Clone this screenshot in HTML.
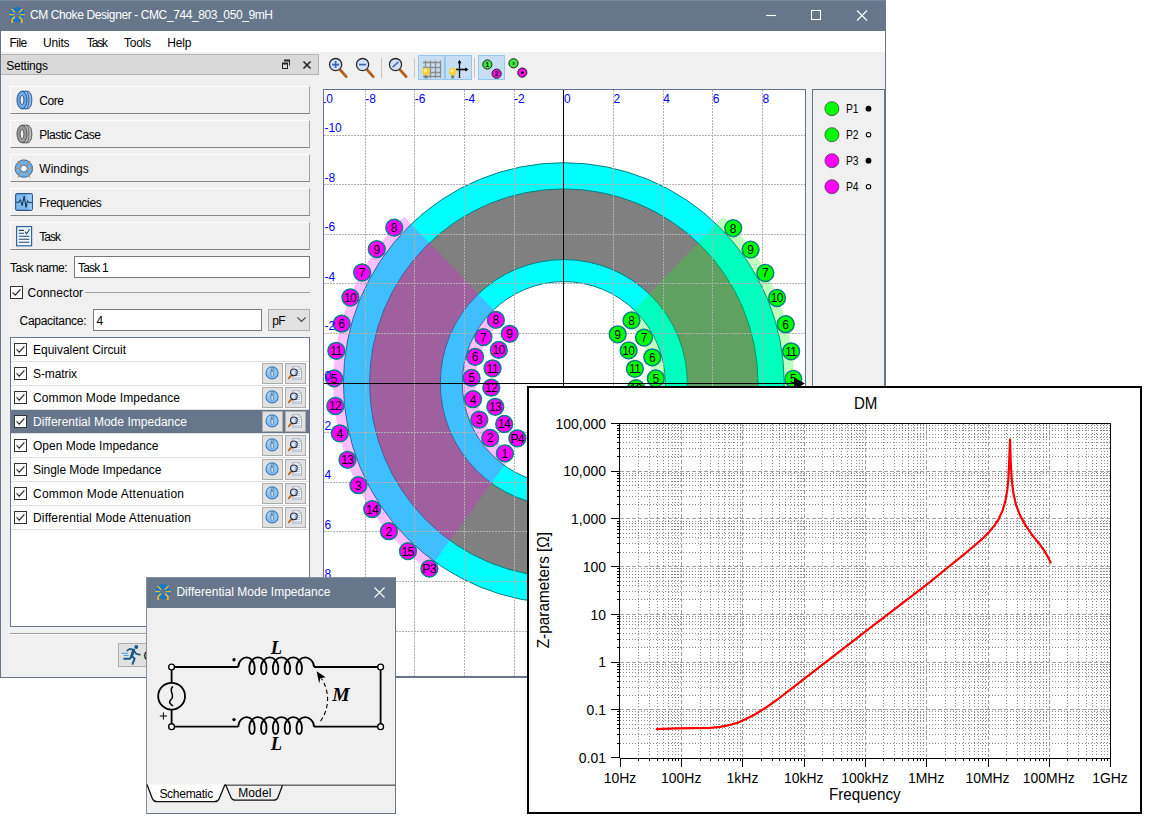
<!DOCTYPE html>
<html><head><meta charset="utf-8"><title>CM Choke Designer</title>
<style>
html,body{margin:0;padding:0;background:#fff;}
body{width:1152px;height:824px;position:relative;overflow:hidden;font-family:"Liberation Sans",sans-serif;font-size:12px;}
.t{position:absolute;white-space:nowrap;line-height:1;}
svg{position:absolute;overflow:visible;}
svg text{font-family:"Liberation Sans",sans-serif;}
</style></head><body>
<div style="position:absolute;left:0px;top:0px;width:886px;height:678px;background:#68768b;"></div>
<div style="position:absolute;left:0px;top:0px;width:886px;height:1px;background:#7b8799;"></div>
<div style="position:absolute;left:1px;top:31px;width:884px;height:646px;background:#f0f0f0;"></div>
<div style="position:absolute;left:1px;top:31px;width:884px;height:21px;background:#fff;"></div>
<svg style="left:8px;top:6px" width="18" height="18" viewBox="0 0 18 18"><circle cx="9" cy="8.6" r="5" fill="none" stroke="#1a78c8" stroke-width="5"/><g stroke="#fbb81c" stroke-width="1.4" stroke-linecap="butt" fill="none"><path d="M1.2 8.6H6.2M11.8 8.6H16.8M3.5 3L7 6.5M14.5 3L11 6.5"/><path d="M7 10.7L4.2 13.3V17M11 10.7L13.8 13.3V17" stroke-width="1.7"/></g></svg>
<span class="t" style="left:30.00px;top:9.34px;font-size:12px;color:#fff;letter-spacing:-0.398px;">CM Choke Designer - CMC_744_803_050_9mH</span>
<svg style="left:760px;top:0" width="126" height="31"><g stroke="#fff" stroke-width="1.1" fill="none"><path d="M6 15.5H16"/><rect x="51.5" y="10.5" width="9" height="9"/><path d="M97 10.5L107 20.5M107 10.5L97 20.5"/></g></svg>
<span class="t" style="left:9.50px;top:36.54px;font-size:12px;color:#000;letter-spacing:-0.545px;">File</span>
<span class="t" style="left:43.00px;top:36.54px;font-size:12px;color:#000;letter-spacing:-0.185px;">Units</span>
<span class="t" style="left:86.80px;top:36.54px;font-size:12px;color:#000;letter-spacing:-1.158px;">Task</span>
<span class="t" style="left:124.00px;top:36.54px;font-size:12px;color:#000;letter-spacing:-0.253px;">Tools</span>
<span class="t" style="left:167.30px;top:36.54px;font-size:12px;color:#000;letter-spacing:-0.193px;">Help</span>
<div style="position:absolute;left:1px;top:54px;width:318px;height:21px;background:#d9d9d9;border:1px solid #b4b4b4;box-sizing:border-box;border-left:none"></div>
<span class="t" style="left:6.30px;top:60.04px;font-size:12px;color:#000;letter-spacing:-0.251px;">Settings</span>
<svg style="left:280px;top:56px" width="36" height="16"><g stroke="#222" fill="none"><path d="M4.5 4.5H9.5V9.5" stroke-width="1"/><path d="M4 4.5H10" stroke-width="2"/><rect x="2.5" y="7.5" width="5" height="5" fill="#d9d9d9"/><path d="M2 7.5H8" stroke-width="2"/><path d="M23.5 5.5L30.5 12.5M30.5 5.5L23.5 12.5" stroke-width="1.6"/></g></svg>
<div style="position:absolute;left:10px;top:86px;width:300px;height:28px;background:#f0f0f0;box-sizing:border-box;border-top:1px solid #fff;border-left:1px solid #fff;border-bottom:1px solid #868686;border-right:1px solid #a0a0a0;"><svg style="left:5px;top:3px" width="18" height="20" viewBox="0 0 18 20"><path d="M6 1.2H11C14.3 1.2 15.8 5 15.8 10S14.3 18.8 11 18.8H6Z" fill="#8cc0f0" stroke="#28558c" stroke-width="1"/><ellipse cx="6" cy="10" rx="5" ry="8.8" fill="#6aaae8" stroke="#28558c"/><ellipse cx="6" cy="10" rx="2" ry="4.6" fill="#f0f0f0" stroke="#28558c"/><path d="M11 1.5C13.5 4 13.5 16 11 18.5" fill="none" stroke="#28558c" stroke-width=".8"/></svg></div>
<span class="t" style="left:39.30px;top:95.04px;font-size:12px;color:#000;letter-spacing:-0.470px;">Core</span>
<div style="position:absolute;left:10px;top:120px;width:300px;height:28px;background:#f0f0f0;box-sizing:border-box;border-top:1px solid #fff;border-left:1px solid #fff;border-bottom:1px solid #868686;border-right:1px solid #a0a0a0;"><svg style="left:5px;top:3px" width="18" height="20" viewBox="0 0 18 20"><path d="M6 1.2H11C14.3 1.2 15.8 5 15.8 10S14.3 18.8 11 18.8H6Z" fill="#bdbdbd" stroke="#555" stroke-width="1"/><ellipse cx="6" cy="10" rx="5" ry="8.8" fill="#9a9a9a" stroke="#555"/><ellipse cx="6" cy="10" rx="2" ry="4.6" fill="#f0f0f0" stroke="#555"/><path d="M11 1.5C13.5 4 13.5 16 11 18.5" fill="none" stroke="#555" stroke-width=".8"/></svg></div>
<span class="t" style="left:39.30px;top:129.04px;font-size:12px;color:#000;letter-spacing:-0.463px;">Plastic Case</span>
<div style="position:absolute;left:10px;top:154px;width:300px;height:28px;background:#f0f0f0;box-sizing:border-box;border-top:1px solid #fff;border-left:1px solid #fff;border-bottom:1px solid #868686;border-right:1px solid #a0a0a0;"><svg style="left:2px;top:3px" width="22" height="22" viewBox="0 0 22 22"><circle cx="10.9" cy="10.6" r="6.1" fill="none" stroke="#6cb0ec" stroke-width="5.2"/><circle cx="10.9" cy="10.6" r="8.7" fill="none" stroke="#2c5c94" stroke-width=".9"/><circle cx="10.9" cy="10.6" r="3.4" fill="#fff" stroke="#2c5c94" stroke-width=".9"/><g stroke="#c08a50" stroke-width="1.2" fill="none"><path d="M4.6 3.2C7 5 8 7 7.6 8.6M17.2 3.2C14.8 5 13.8 7 14.2 8.6M1.8 10.6C4 9.8 6 9.9 7.5 10.6M20 10.6C17.8 9.8 15.8 9.9 14.3 10.6M7.6 12.8C7 15 5.6 16.6 5.2 19.6M14.2 12.8C14.8 15 16.2 16.6 16.6 19.6"/></g></svg></div>
<span class="t" style="left:39.30px;top:163.04px;font-size:12px;color:#000;letter-spacing:0.021px;">Windings</span>
<div style="position:absolute;left:10px;top:188px;width:300px;height:28px;background:#f0f0f0;box-sizing:border-box;border-top:1px solid #fff;border-left:1px solid #fff;border-bottom:1px solid #868686;border-right:1px solid #a0a0a0;"><svg style="left:4px;top:4px" width="19" height="19" viewBox="0 0 19 19"><rect x=".6" y=".6" width="16.8" height="16.8" rx="1.6" fill="#7ab8f0" stroke="#28558c" stroke-width="1.1"/><path d="M12 1.2H16.8V16.8H14Z" fill="#a6d0f6" opacity=".7"/><path d="M1.2 9.3H4L5.4 6.6L7.2 12.6L9.2 3.2L11 14.4L12.6 7.6L13.8 9.6H16.8" fill="none" stroke="#14304c" stroke-width="1"/></svg></div>
<span class="t" style="left:39.30px;top:197.04px;font-size:12px;color:#000;letter-spacing:-0.363px;">Frequencies</span>
<div style="position:absolute;left:10px;top:222px;width:300px;height:28px;background:#f0f0f0;box-sizing:border-box;border-top:1px solid #fff;border-left:1px solid #fff;border-bottom:1px solid #868686;border-right:1px solid #a0a0a0;"><svg style="left:5px;top:3px" width="17" height="21" viewBox="0 0 17 21"><rect x=".6" y=".6" width="15" height="19.2" fill="#f4f8fd" stroke="#2a64a4" stroke-width="1.2"/><g stroke="#1c4678" stroke-width="1.1" fill="none"><path d="M2.8 4.4H8M2.8 7.2H8M2.8 10.2H13.4M2.8 13.2H13.4M2.8 16.2H13.4"/><path d="M9 5.6L10.6 7.8L13.6 3.2"/></g></svg></div>
<span class="t" style="left:39.30px;top:231.04px;font-size:12px;color:#000;letter-spacing:-0.991px;">Task</span>
<span class="t" style="left:10.00px;top:262.04px;font-size:12px;color:#000;letter-spacing:-0.418px;">Task name:</span>
<div style="position:absolute;left:74px;top:256px;width:236px;height:22px;background:#fff;border:1px solid #7a7a7a;box-sizing:border-box;"></div>
<span class="t" style="left:78.00px;top:262.04px;font-size:12px;color:#000;letter-spacing:-0.816px;">Task 1</span>
<svg style="left:10px;top:286px" width="13" height="13"><rect x=".5" y=".5" width="12" height="12" fill="#fff" stroke="#333"/><path d="M2.6 6.4L5.2 9.2L10.4 3.4" fill="none" stroke="#222" stroke-width="1.15"/></svg>
<span class="t" style="left:27.50px;top:286.54px;font-size:12px;color:#000;letter-spacing:0.029px;">Connector</span>
<div style="position:absolute;left:85px;top:292px;width:225px;height:1px;background:#a0a0a0;"></div>
<span class="t" style="left:19.50px;top:314.74px;font-size:12px;color:#000;letter-spacing:-0.276px;">Capacitance:</span>
<div style="position:absolute;left:93px;top:309px;width:169px;height:22px;background:#fff;border:1px solid #7a7a7a;box-sizing:border-box;"></div>
<span class="t" style="left:96.50px;top:314.74px;font-size:12px;color:#000;">4</span>
<div style="position:absolute;left:268px;top:309px;width:42px;height:22px;background:#e1e1e1;border:1px solid #adadad;box-sizing:border-box;"></div>
<span class="t" style="left:272.30px;top:314.74px;font-size:12px;color:#000;letter-spacing:-0.603px;">pF</span>
<svg style="left:296px;top:316px" width="12" height="8"><path d="M1.5 1.5L5.5 5.5L9.5 1.5" fill="none" stroke="#444" stroke-width="1.1"/></svg>
<div style="position:absolute;left:10px;top:337px;width:300px;height:290px;background:#fff;border:1px solid #6a778d;box-sizing:border-box;"></div>
<div style="position:absolute;left:11px;top:361px;width:298px;height:1px;background:#dfdfdf;"></div>
<svg style="left:14px;top:343px" width="13" height="13"><rect x=".5" y=".5" width="12" height="12" fill="#fff" stroke="#333"/><path d="M2.6 6.4L5.2 9.2L10.4 3.4" fill="none" stroke="#222" stroke-width="1.15"/></svg>
<span class="t" style="left:33.00px;top:344.04px;font-size:12px;color:#000;letter-spacing:-0.022px;">Equivalent Circuit</span>
<div style="position:absolute;left:11px;top:385px;width:298px;height:1px;background:#dfdfdf;"></div>
<svg style="left:14px;top:367px" width="13" height="13"><rect x=".5" y=".5" width="12" height="12" fill="#fff" stroke="#333"/><path d="M2.6 6.4L5.2 9.2L10.4 3.4" fill="none" stroke="#222" stroke-width="1.15"/></svg>
<span class="t" style="left:33.00px;top:368.04px;font-size:12px;color:#000;letter-spacing:-0.096px;">S-matrix</span>
<div style="position:absolute;left:262px;top:363px;width:21px;height:21px;background:#e1e1e1;border:1px solid #adadad;box-sizing:border-box;"><svg style="left:-1px;top:-1px" width="21" height="21" viewBox="0 0 21 21"><circle cx="10.1" cy="9.9" r="6" fill="#8cc6f6" stroke="#3a78b8" stroke-width="1.1"/><path d="M5.6 8.2A4.8 4.8 0 0 1 9 5" stroke="#c4e2fb" stroke-width="1.2" fill="none"/><path d="M10.1 8.2V13.8" stroke="#2c5a90" stroke-width="2.6" fill="none"/><circle cx="10.1" cy="6.4" r="1.5" fill="#2c5a90"/><path d="M10.1 8.5V13.5" stroke="#fff" stroke-width="1.3" fill="none"/><circle cx="10.1" cy="6.4" r=".8" fill="#fff"/></svg></div>
<div style="position:absolute;left:285px;top:363px;width:21px;height:21px;background:#e1e1e1;border:1px solid #adadad;box-sizing:border-box;"><svg style="left:-1px;top:-1px" width="21" height="21" viewBox="0 0 21 21"><path d="M7.8 3.8H13.8L16.4 6.6V16H7.8Z" fill="#fff" stroke="#9cb0c4" stroke-width="1.1"/><path d="M11 6.5H15M11 8.5H15M11 10.5H15M9 12.5H15M9 14.3H15" stroke="#b4bcc6" stroke-width=".9"/><path d="M6.9 11.6L3.9 15.2" stroke="#c06820" stroke-width="1.9" stroke-linecap="round"/><circle cx="8.9" cy="9.3" r="3.3" fill="#d6e6fa" stroke="#2e2e2e" stroke-width="1.2"/><path d="M9.6 7.4A2 2 0 0 1 9.6 11.2" stroke="#7aa8ec" stroke-width="1" fill="none"/></svg></div>
<div style="position:absolute;left:11px;top:409px;width:298px;height:1px;background:#dfdfdf;"></div>
<svg style="left:14px;top:391px" width="13" height="13"><rect x=".5" y=".5" width="12" height="12" fill="#fff" stroke="#333"/><path d="M2.6 6.4L5.2 9.2L10.4 3.4" fill="none" stroke="#222" stroke-width="1.15"/></svg>
<span class="t" style="left:33.00px;top:392.04px;font-size:12px;color:#000;letter-spacing:0.113px;">Common Mode Impedance</span>
<div style="position:absolute;left:262px;top:387px;width:21px;height:21px;background:#e1e1e1;border:1px solid #adadad;box-sizing:border-box;"><svg style="left:-1px;top:-1px" width="21" height="21" viewBox="0 0 21 21"><circle cx="10.1" cy="9.9" r="6" fill="#8cc6f6" stroke="#3a78b8" stroke-width="1.1"/><path d="M5.6 8.2A4.8 4.8 0 0 1 9 5" stroke="#c4e2fb" stroke-width="1.2" fill="none"/><path d="M10.1 8.2V13.8" stroke="#2c5a90" stroke-width="2.6" fill="none"/><circle cx="10.1" cy="6.4" r="1.5" fill="#2c5a90"/><path d="M10.1 8.5V13.5" stroke="#fff" stroke-width="1.3" fill="none"/><circle cx="10.1" cy="6.4" r=".8" fill="#fff"/></svg></div>
<div style="position:absolute;left:285px;top:387px;width:21px;height:21px;background:#e1e1e1;border:1px solid #adadad;box-sizing:border-box;"><svg style="left:-1px;top:-1px" width="21" height="21" viewBox="0 0 21 21"><path d="M7.8 3.8H13.8L16.4 6.6V16H7.8Z" fill="#fff" stroke="#9cb0c4" stroke-width="1.1"/><path d="M11 6.5H15M11 8.5H15M11 10.5H15M9 12.5H15M9 14.3H15" stroke="#b4bcc6" stroke-width=".9"/><path d="M6.9 11.6L3.9 15.2" stroke="#c06820" stroke-width="1.9" stroke-linecap="round"/><circle cx="8.9" cy="9.3" r="3.3" fill="#d6e6fa" stroke="#2e2e2e" stroke-width="1.2"/><path d="M9.6 7.4A2 2 0 0 1 9.6 11.2" stroke="#7aa8ec" stroke-width="1" fill="none"/></svg></div>
<div style="position:absolute;left:11px;top:410px;width:298px;height:23px;background:#68768b;"></div>
<div style="position:absolute;left:11px;top:433px;width:298px;height:1px;background:#dfdfdf;"></div>
<svg style="left:14px;top:415px" width="13" height="13"><rect x=".5" y=".5" width="12" height="12" fill="#fff" stroke="#333"/><path d="M2.6 6.4L5.2 9.2L10.4 3.4" fill="none" stroke="#222" stroke-width="1.15"/></svg>
<span class="t" style="left:33.00px;top:416.04px;font-size:12px;color:#fff;letter-spacing:0.031px;">Differential Mode Impedance</span>
<div style="position:absolute;left:262px;top:411px;width:21px;height:21px;background:#e1e1e1;border:1px solid #adadad;box-sizing:border-box;"><svg style="left:-1px;top:-1px" width="21" height="21" viewBox="0 0 21 21"><circle cx="10.1" cy="9.9" r="6" fill="#8cc6f6" stroke="#3a78b8" stroke-width="1.1"/><path d="M5.6 8.2A4.8 4.8 0 0 1 9 5" stroke="#c4e2fb" stroke-width="1.2" fill="none"/><path d="M10.1 8.2V13.8" stroke="#2c5a90" stroke-width="2.6" fill="none"/><circle cx="10.1" cy="6.4" r="1.5" fill="#2c5a90"/><path d="M10.1 8.5V13.5" stroke="#fff" stroke-width="1.3" fill="none"/><circle cx="10.1" cy="6.4" r=".8" fill="#fff"/></svg></div>
<div style="position:absolute;left:285px;top:411px;width:21px;height:21px;background:#e1e1e1;border:1px solid #adadad;box-sizing:border-box;"><svg style="left:-1px;top:-1px" width="21" height="21" viewBox="0 0 21 21"><path d="M7.8 3.8H13.8L16.4 6.6V16H7.8Z" fill="#fff" stroke="#9cb0c4" stroke-width="1.1"/><path d="M11 6.5H15M11 8.5H15M11 10.5H15M9 12.5H15M9 14.3H15" stroke="#b4bcc6" stroke-width=".9"/><path d="M6.9 11.6L3.9 15.2" stroke="#c06820" stroke-width="1.9" stroke-linecap="round"/><circle cx="8.9" cy="9.3" r="3.3" fill="#d6e6fa" stroke="#2e2e2e" stroke-width="1.2"/><path d="M9.6 7.4A2 2 0 0 1 9.6 11.2" stroke="#7aa8ec" stroke-width="1" fill="none"/></svg></div>
<div style="position:absolute;left:11px;top:457px;width:298px;height:1px;background:#dfdfdf;"></div>
<svg style="left:14px;top:439px" width="13" height="13"><rect x=".5" y=".5" width="12" height="12" fill="#fff" stroke="#333"/><path d="M2.6 6.4L5.2 9.2L10.4 3.4" fill="none" stroke="#222" stroke-width="1.15"/></svg>
<span class="t" style="left:33.00px;top:440.04px;font-size:12px;color:#000;letter-spacing:0.005px;">Open Mode Impedance</span>
<div style="position:absolute;left:262px;top:435px;width:21px;height:21px;background:#e1e1e1;border:1px solid #adadad;box-sizing:border-box;"><svg style="left:-1px;top:-1px" width="21" height="21" viewBox="0 0 21 21"><circle cx="10.1" cy="9.9" r="6" fill="#8cc6f6" stroke="#3a78b8" stroke-width="1.1"/><path d="M5.6 8.2A4.8 4.8 0 0 1 9 5" stroke="#c4e2fb" stroke-width="1.2" fill="none"/><path d="M10.1 8.2V13.8" stroke="#2c5a90" stroke-width="2.6" fill="none"/><circle cx="10.1" cy="6.4" r="1.5" fill="#2c5a90"/><path d="M10.1 8.5V13.5" stroke="#fff" stroke-width="1.3" fill="none"/><circle cx="10.1" cy="6.4" r=".8" fill="#fff"/></svg></div>
<div style="position:absolute;left:285px;top:435px;width:21px;height:21px;background:#e1e1e1;border:1px solid #adadad;box-sizing:border-box;"><svg style="left:-1px;top:-1px" width="21" height="21" viewBox="0 0 21 21"><path d="M7.8 3.8H13.8L16.4 6.6V16H7.8Z" fill="#fff" stroke="#9cb0c4" stroke-width="1.1"/><path d="M11 6.5H15M11 8.5H15M11 10.5H15M9 12.5H15M9 14.3H15" stroke="#b4bcc6" stroke-width=".9"/><path d="M6.9 11.6L3.9 15.2" stroke="#c06820" stroke-width="1.9" stroke-linecap="round"/><circle cx="8.9" cy="9.3" r="3.3" fill="#d6e6fa" stroke="#2e2e2e" stroke-width="1.2"/><path d="M9.6 7.4A2 2 0 0 1 9.6 11.2" stroke="#7aa8ec" stroke-width="1" fill="none"/></svg></div>
<div style="position:absolute;left:11px;top:481px;width:298px;height:1px;background:#dfdfdf;"></div>
<svg style="left:14px;top:463px" width="13" height="13"><rect x=".5" y=".5" width="12" height="12" fill="#fff" stroke="#333"/><path d="M2.6 6.4L5.2 9.2L10.4 3.4" fill="none" stroke="#222" stroke-width="1.15"/></svg>
<span class="t" style="left:33.00px;top:464.04px;font-size:12px;color:#000;letter-spacing:-0.046px;">Single Mode Impedance</span>
<div style="position:absolute;left:262px;top:459px;width:21px;height:21px;background:#e1e1e1;border:1px solid #adadad;box-sizing:border-box;"><svg style="left:-1px;top:-1px" width="21" height="21" viewBox="0 0 21 21"><circle cx="10.1" cy="9.9" r="6" fill="#8cc6f6" stroke="#3a78b8" stroke-width="1.1"/><path d="M5.6 8.2A4.8 4.8 0 0 1 9 5" stroke="#c4e2fb" stroke-width="1.2" fill="none"/><path d="M10.1 8.2V13.8" stroke="#2c5a90" stroke-width="2.6" fill="none"/><circle cx="10.1" cy="6.4" r="1.5" fill="#2c5a90"/><path d="M10.1 8.5V13.5" stroke="#fff" stroke-width="1.3" fill="none"/><circle cx="10.1" cy="6.4" r=".8" fill="#fff"/></svg></div>
<div style="position:absolute;left:285px;top:459px;width:21px;height:21px;background:#e1e1e1;border:1px solid #adadad;box-sizing:border-box;"><svg style="left:-1px;top:-1px" width="21" height="21" viewBox="0 0 21 21"><path d="M7.8 3.8H13.8L16.4 6.6V16H7.8Z" fill="#fff" stroke="#9cb0c4" stroke-width="1.1"/><path d="M11 6.5H15M11 8.5H15M11 10.5H15M9 12.5H15M9 14.3H15" stroke="#b4bcc6" stroke-width=".9"/><path d="M6.9 11.6L3.9 15.2" stroke="#c06820" stroke-width="1.9" stroke-linecap="round"/><circle cx="8.9" cy="9.3" r="3.3" fill="#d6e6fa" stroke="#2e2e2e" stroke-width="1.2"/><path d="M9.6 7.4A2 2 0 0 1 9.6 11.2" stroke="#7aa8ec" stroke-width="1" fill="none"/></svg></div>
<div style="position:absolute;left:11px;top:505px;width:298px;height:1px;background:#dfdfdf;"></div>
<svg style="left:14px;top:487px" width="13" height="13"><rect x=".5" y=".5" width="12" height="12" fill="#fff" stroke="#333"/><path d="M2.6 6.4L5.2 9.2L10.4 3.4" fill="none" stroke="#222" stroke-width="1.15"/></svg>
<span class="t" style="left:33.00px;top:488.04px;font-size:12px;color:#000;letter-spacing:0.254px;">Common Mode Attenuation</span>
<div style="position:absolute;left:262px;top:483px;width:21px;height:21px;background:#e1e1e1;border:1px solid #adadad;box-sizing:border-box;"><svg style="left:-1px;top:-1px" width="21" height="21" viewBox="0 0 21 21"><circle cx="10.1" cy="9.9" r="6" fill="#8cc6f6" stroke="#3a78b8" stroke-width="1.1"/><path d="M5.6 8.2A4.8 4.8 0 0 1 9 5" stroke="#c4e2fb" stroke-width="1.2" fill="none"/><path d="M10.1 8.2V13.8" stroke="#2c5a90" stroke-width="2.6" fill="none"/><circle cx="10.1" cy="6.4" r="1.5" fill="#2c5a90"/><path d="M10.1 8.5V13.5" stroke="#fff" stroke-width="1.3" fill="none"/><circle cx="10.1" cy="6.4" r=".8" fill="#fff"/></svg></div>
<div style="position:absolute;left:285px;top:483px;width:21px;height:21px;background:#e1e1e1;border:1px solid #adadad;box-sizing:border-box;"><svg style="left:-1px;top:-1px" width="21" height="21" viewBox="0 0 21 21"><path d="M7.8 3.8H13.8L16.4 6.6V16H7.8Z" fill="#fff" stroke="#9cb0c4" stroke-width="1.1"/><path d="M11 6.5H15M11 8.5H15M11 10.5H15M9 12.5H15M9 14.3H15" stroke="#b4bcc6" stroke-width=".9"/><path d="M6.9 11.6L3.9 15.2" stroke="#c06820" stroke-width="1.9" stroke-linecap="round"/><circle cx="8.9" cy="9.3" r="3.3" fill="#d6e6fa" stroke="#2e2e2e" stroke-width="1.2"/><path d="M9.6 7.4A2 2 0 0 1 9.6 11.2" stroke="#7aa8ec" stroke-width="1" fill="none"/></svg></div>
<div style="position:absolute;left:11px;top:529px;width:298px;height:1px;background:#dfdfdf;"></div>
<svg style="left:14px;top:511px" width="13" height="13"><rect x=".5" y=".5" width="12" height="12" fill="#fff" stroke="#333"/><path d="M2.6 6.4L5.2 9.2L10.4 3.4" fill="none" stroke="#222" stroke-width="1.15"/></svg>
<span class="t" style="left:33.00px;top:512.04px;font-size:12px;color:#000;letter-spacing:0.147px;">Differential Mode Attenuation</span>
<div style="position:absolute;left:262px;top:507px;width:21px;height:21px;background:#e1e1e1;border:1px solid #adadad;box-sizing:border-box;"><svg style="left:-1px;top:-1px" width="21" height="21" viewBox="0 0 21 21"><circle cx="10.1" cy="9.9" r="6" fill="#8cc6f6" stroke="#3a78b8" stroke-width="1.1"/><path d="M5.6 8.2A4.8 4.8 0 0 1 9 5" stroke="#c4e2fb" stroke-width="1.2" fill="none"/><path d="M10.1 8.2V13.8" stroke="#2c5a90" stroke-width="2.6" fill="none"/><circle cx="10.1" cy="6.4" r="1.5" fill="#2c5a90"/><path d="M10.1 8.5V13.5" stroke="#fff" stroke-width="1.3" fill="none"/><circle cx="10.1" cy="6.4" r=".8" fill="#fff"/></svg></div>
<div style="position:absolute;left:285px;top:507px;width:21px;height:21px;background:#e1e1e1;border:1px solid #adadad;box-sizing:border-box;"><svg style="left:-1px;top:-1px" width="21" height="21" viewBox="0 0 21 21"><path d="M7.8 3.8H13.8L16.4 6.6V16H7.8Z" fill="#fff" stroke="#9cb0c4" stroke-width="1.1"/><path d="M11 6.5H15M11 8.5H15M11 10.5H15M9 12.5H15M9 14.3H15" stroke="#b4bcc6" stroke-width=".9"/><path d="M6.9 11.6L3.9 15.2" stroke="#c06820" stroke-width="1.9" stroke-linecap="round"/><circle cx="8.9" cy="9.3" r="3.3" fill="#d6e6fa" stroke="#2e2e2e" stroke-width="1.2"/><path d="M9.6 7.4A2 2 0 0 1 9.6 11.2" stroke="#7aa8ec" stroke-width="1" fill="none"/></svg></div>
<div style="position:absolute;left:10px;top:633px;width:300px;height:1px;background:#a0a0a0;"></div>
<div style="position:absolute;left:10px;top:634px;width:300px;height:1px;background:#fff;"></div>
<div style="position:absolute;left:118px;top:643px;width:60px;height:24px;background:#e1e1e1;border:1px solid #adadad;box-sizing:border-box;"><svg style="left:-1px;top:-1px" width="30" height="24" viewBox="0 0 30 24"><g fill="none" stroke="#1d5a86" stroke-linecap="round" stroke-linejoin="round"><path d="M15.6 7.2L13.6 13.4" stroke-width="3"/><path d="M15.2 6.6L11.6 5.9L9.2 7.6" stroke-width="1.7"/><path d="M15.8 7.4L18.4 10.9L21.8 11.7" stroke-width="1.7"/><path d="M13.4 13.6L12 15.7H6.2" stroke-width="2"/><path d="M14 13.4L16.6 15.6L14.6 20.8" stroke-width="2"/></g><circle cx="18.3" cy="4" r="2" fill="#1d5a86"/><path d="M3.6 10.3H10M5.6 12.5H10.6" stroke="#4a9ade" stroke-width="1" fill="none"/></svg></div>
<span class="t" style="left:143.60px;top:649.84px;font-size:12px;color:#000;">Calculate</span>
<div style="position:absolute;left:323px;top:89px;width:483px;height:588px;background:#fff;border:1px solid #64728a;box-sizing:border-box;"></div>
<div style="position:absolute;left:812px;top:89px;width:73px;height:588px;background:#f0f0f0;border:1px solid #64728a;box-sizing:border-box;"></div>
<svg style="left:0;top:0" width="1152" height="824" viewBox="0 0 1152 824"><defs><clipPath id="pc"><rect x="324" y="90" width="481" height="586"/></clipPath></defs><g clip-path="url(#pc)"><path d="M343.4 383.1A220.4 220.4 0 1 0 784.2 383.1A220.4 220.4 0 1 0 343.4 383.1ZM462.3 383.1A101.5 101.5 0 1 1 665.3 383.1A101.5 101.5 0 1 1 462.3 383.1Z" fill="#00ffff" fill-rule="evenodd"/><path d="M369.6 383.1A194.2 194.2 0 1 0 758 383.1A194.2 194.2 0 1 0 369.6 383.1ZM440.3 383.1A123.5 123.5 0 1 1 687.3 383.1A123.5 123.5 0 1 1 440.3 383.1Z" fill="#808080" fill-rule="evenodd"/><circle cx="563.8" cy="383.1" r="220.4" fill="none" stroke="#008080" stroke-width="1"/><circle cx="563.8" cy="383.1" r="194.2" fill="none" stroke="#008080" stroke-width="1"/><circle cx="563.8" cy="383.1" r="123.5" fill="none" stroke="#008080" stroke-width="1"/><circle cx="563.8" cy="383.1" r="101.5" fill="none" stroke="#008080" stroke-width="1"/><path d="M404.26 216.73A230.5 230.5 0 0 0 428.64 569.81L511.91 454.79A88.5 88.5 0 0 1 502.55 319.22Z" fill="#ff00ff" fill-opacity=".25"/><path d="M723.34 216.73A230.5 230.5 0 0 1 698.96 569.81L615.69 454.79A88.5 88.5 0 0 0 625.05 319.22Z" fill="#00ff00" fill-opacity=".25"/><path d="M315.5 90V677" stroke="#b2b2b2" stroke-width="1" stroke-dasharray="2 1" fill="none"/><path d="M324 135.5H805" stroke="#b2b2b2" stroke-width="1" stroke-dasharray="2 1" fill="none"/><path d="M365.5 90V677" stroke="#b2b2b2" stroke-width="1" stroke-dasharray="2 1" fill="none"/><path d="M324 184.5H805" stroke="#b2b2b2" stroke-width="1" stroke-dasharray="2 1" fill="none"/><path d="M414.5 90V677" stroke="#b2b2b2" stroke-width="1" stroke-dasharray="2 1" fill="none"/><path d="M324 234.5H805" stroke="#b2b2b2" stroke-width="1" stroke-dasharray="2 1" fill="none"/><path d="M464.5 90V677" stroke="#b2b2b2" stroke-width="1" stroke-dasharray="2 1" fill="none"/><path d="M324 283.5H805" stroke="#b2b2b2" stroke-width="1" stroke-dasharray="2 1" fill="none"/><path d="M514.5 90V677" stroke="#b2b2b2" stroke-width="1" stroke-dasharray="2 1" fill="none"/><path d="M324 333.5H805" stroke="#b2b2b2" stroke-width="1" stroke-dasharray="2 1" fill="none"/><path d="M613.5 90V677" stroke="#b2b2b2" stroke-width="1" stroke-dasharray="2 1" fill="none"/><path d="M324 432.5H805" stroke="#b2b2b2" stroke-width="1" stroke-dasharray="2 1" fill="none"/><path d="M663.5 90V677" stroke="#b2b2b2" stroke-width="1" stroke-dasharray="2 1" fill="none"/><path d="M324 482.5H805" stroke="#b2b2b2" stroke-width="1" stroke-dasharray="2 1" fill="none"/><path d="M712.5 90V677" stroke="#b2b2b2" stroke-width="1" stroke-dasharray="2 1" fill="none"/><path d="M324 531.5H805" stroke="#b2b2b2" stroke-width="1" stroke-dasharray="2 1" fill="none"/><path d="M762.5 90V677" stroke="#b2b2b2" stroke-width="1" stroke-dasharray="2 1" fill="none"/><path d="M324 581.5H805" stroke="#b2b2b2" stroke-width="1" stroke-dasharray="2 1" fill="none"/><path d="M811.5 90V677" stroke="#b2b2b2" stroke-width="1" stroke-dasharray="2 1" fill="none"/><path d="M324 631.5H805" stroke="#b2b2b2" stroke-width="1" stroke-dasharray="2 1" fill="none"/><circle cx="394.2" cy="227.6" r="8.4" fill="#ff00ff" stroke="#008080" stroke-width="1.5"/><text x="394.2" y="232.0" font-size="12" text-anchor="middle">8</text><circle cx="376.8" cy="249.1" r="8.4" fill="#ff00ff" stroke="#008080" stroke-width="1.5"/><text x="376.8" y="253.5" font-size="12" text-anchor="middle">9</text><circle cx="362.1" cy="272.5" r="8.4" fill="#ff00ff" stroke="#008080" stroke-width="1.5"/><text x="362.1" y="276.9" font-size="12" text-anchor="middle">7</text><circle cx="350.4" cy="297.5" r="8.4" fill="#ff00ff" stroke="#008080" stroke-width="1.5"/><text x="350.0" y="301.9" font-size="12" text-anchor="middle" letter-spacing="-0.7">10</text><circle cx="341.7" cy="323.7" r="8.4" fill="#ff00ff" stroke="#008080" stroke-width="1.5"/><text x="341.7" y="328.1" font-size="12" text-anchor="middle">6</text><circle cx="336.3" cy="350.8" r="8.4" fill="#ff00ff" stroke="#008080" stroke-width="1.5"/><text x="335.9" y="355.2" font-size="12" text-anchor="middle" letter-spacing="-0.7">11</text><circle cx="334.1" cy="378.4" r="8.4" fill="#ff00ff" stroke="#008080" stroke-width="1.5"/><text x="334.1" y="382.8" font-size="12" text-anchor="middle">5</text><circle cx="335.3" cy="406.0" r="8.4" fill="#ff00ff" stroke="#008080" stroke-width="1.5"/><text x="335.0" y="410.4" font-size="12" text-anchor="middle" letter-spacing="-0.7">12</text><circle cx="339.8" cy="433.3" r="8.4" fill="#ff00ff" stroke="#008080" stroke-width="1.5"/><text x="339.8" y="437.7" font-size="12" text-anchor="middle">4</text><circle cx="347.5" cy="459.8" r="8.4" fill="#ff00ff" stroke="#008080" stroke-width="1.5"/><text x="347.2" y="464.2" font-size="12" text-anchor="middle" letter-spacing="-0.7">13</text><circle cx="358.4" cy="485.2" r="8.4" fill="#ff00ff" stroke="#008080" stroke-width="1.5"/><text x="358.4" y="489.6" font-size="12" text-anchor="middle">3</text><circle cx="372.2" cy="509.1" r="8.4" fill="#ff00ff" stroke="#008080" stroke-width="1.5"/><text x="371.9" y="513.5" font-size="12" text-anchor="middle" letter-spacing="-0.7">14</text><circle cx="388.9" cy="531.2" r="8.4" fill="#ff00ff" stroke="#008080" stroke-width="1.5"/><text x="388.9" y="535.6" font-size="12" text-anchor="middle">2</text><circle cx="408.0" cy="551.1" r="8.4" fill="#ff00ff" stroke="#008080" stroke-width="1.5"/><text x="407.6" y="555.5" font-size="12" text-anchor="middle" letter-spacing="-0.7">15</text><circle cx="429.4" cy="568.6" r="8.4" fill="#ff00ff" stroke="#008080" stroke-width="1.5"/><text x="429.0" y="573.0" font-size="12" text-anchor="middle" letter-spacing="-0.7">P3</text><circle cx="495.9" cy="319.9" r="8.4" fill="#ff00ff" stroke="#008080" stroke-width="1.5"/><text x="495.9" y="324.3" font-size="12" text-anchor="middle">8</text><circle cx="483.4" cy="337.1" r="8.4" fill="#ff00ff" stroke="#008080" stroke-width="1.5"/><text x="483.4" y="341.5" font-size="12" text-anchor="middle">7</text><circle cx="475.1" cy="356.8" r="8.4" fill="#ff00ff" stroke="#008080" stroke-width="1.5"/><text x="475.1" y="361.2" font-size="12" text-anchor="middle">6</text><circle cx="471.6" cy="377.9" r="8.4" fill="#ff00ff" stroke="#008080" stroke-width="1.5"/><text x="471.6" y="382.3" font-size="12" text-anchor="middle">5</text><circle cx="473.0" cy="399.2" r="8.4" fill="#ff00ff" stroke="#008080" stroke-width="1.5"/><text x="473.0" y="403.6" font-size="12" text-anchor="middle">4</text><circle cx="479.3" cy="419.6" r="8.4" fill="#ff00ff" stroke="#008080" stroke-width="1.5"/><text x="479.3" y="424.0" font-size="12" text-anchor="middle">3</text><circle cx="490.2" cy="438.0" r="8.4" fill="#ff00ff" stroke="#008080" stroke-width="1.5"/><text x="490.2" y="442.4" font-size="12" text-anchor="middle">2</text><circle cx="504.9" cy="453.4" r="8.4" fill="#ff00ff" stroke="#008080" stroke-width="1.5"/><text x="504.9" y="457.8" font-size="12" text-anchor="middle">1</text><circle cx="509.7" cy="333.8" r="8.4" fill="#ff00ff" stroke="#008080" stroke-width="1.5"/><text x="509.7" y="338.2" font-size="12" text-anchor="middle">9</text><circle cx="498.8" cy="349.9" r="8.4" fill="#ff00ff" stroke="#008080" stroke-width="1.5"/><text x="498.4" y="354.3" font-size="12" text-anchor="middle" letter-spacing="-0.7">10</text><circle cx="492.5" cy="368.3" r="8.4" fill="#ff00ff" stroke="#008080" stroke-width="1.5"/><text x="492.1" y="372.7" font-size="12" text-anchor="middle" letter-spacing="-0.7">11</text><circle cx="491.3" cy="387.7" r="8.4" fill="#ff00ff" stroke="#008080" stroke-width="1.5"/><text x="490.9" y="392.1" font-size="12" text-anchor="middle" letter-spacing="-0.7">12</text><circle cx="495.3" cy="406.8" r="8.4" fill="#ff00ff" stroke="#008080" stroke-width="1.5"/><text x="495.0" y="411.2" font-size="12" text-anchor="middle" letter-spacing="-0.7">13</text><circle cx="504.2" cy="424.0" r="8.4" fill="#ff00ff" stroke="#008080" stroke-width="1.5"/><text x="503.9" y="428.4" font-size="12" text-anchor="middle" letter-spacing="-0.7">14</text><circle cx="517.4" cy="438.3" r="8.4" fill="#ff00ff" stroke="#008080" stroke-width="1.5"/><text x="517.1" y="442.7" font-size="12" text-anchor="middle" letter-spacing="-0.7">P4</text><circle cx="733.2" cy="228.1" r="8.4" fill="#00ff00" stroke="#008080" stroke-width="1.5"/><text x="733.2" y="232.5" font-size="12" text-anchor="middle">8</text><circle cx="750.6" cy="249.6" r="8.4" fill="#00ff00" stroke="#008080" stroke-width="1.5"/><text x="750.6" y="254.0" font-size="12" text-anchor="middle">9</text><circle cx="765.3" cy="273.0" r="8.4" fill="#00ff00" stroke="#008080" stroke-width="1.5"/><text x="765.3" y="277.4" font-size="12" text-anchor="middle">7</text><circle cx="777.0" cy="298.0" r="8.4" fill="#00ff00" stroke="#008080" stroke-width="1.5"/><text x="776.7" y="302.4" font-size="12" text-anchor="middle" letter-spacing="-0.7">10</text><circle cx="785.7" cy="324.2" r="8.4" fill="#00ff00" stroke="#008080" stroke-width="1.5"/><text x="785.7" y="328.6" font-size="12" text-anchor="middle">6</text><circle cx="791.1" cy="351.3" r="8.4" fill="#00ff00" stroke="#008080" stroke-width="1.5"/><text x="790.8" y="355.7" font-size="12" text-anchor="middle" letter-spacing="-0.7">11</text><circle cx="793.3" cy="378.9" r="8.4" fill="#00ff00" stroke="#008080" stroke-width="1.5"/><text x="793.3" y="383.3" font-size="12" text-anchor="middle">5</text><circle cx="792.1" cy="406.5" r="8.4" fill="#00ff00" stroke="#008080" stroke-width="1.5"/><text x="791.7" y="410.9" font-size="12" text-anchor="middle" letter-spacing="-0.7">12</text><circle cx="787.6" cy="433.8" r="8.4" fill="#00ff00" stroke="#008080" stroke-width="1.5"/><text x="787.6" y="438.2" font-size="12" text-anchor="middle">4</text><circle cx="779.9" cy="460.3" r="8.4" fill="#00ff00" stroke="#008080" stroke-width="1.5"/><text x="779.5" y="464.7" font-size="12" text-anchor="middle" letter-spacing="-0.7">13</text><circle cx="769.0" cy="485.7" r="8.4" fill="#00ff00" stroke="#008080" stroke-width="1.5"/><text x="769.0" y="490.1" font-size="12" text-anchor="middle">3</text><circle cx="755.2" cy="509.6" r="8.4" fill="#00ff00" stroke="#008080" stroke-width="1.5"/><text x="754.8" y="514.0" font-size="12" text-anchor="middle" letter-spacing="-0.7">14</text><circle cx="738.5" cy="531.7" r="8.4" fill="#00ff00" stroke="#008080" stroke-width="1.5"/><text x="738.5" y="536.1" font-size="12" text-anchor="middle">2</text><circle cx="719.4" cy="551.6" r="8.4" fill="#00ff00" stroke="#008080" stroke-width="1.5"/><text x="719.1" y="556.0" font-size="12" text-anchor="middle" letter-spacing="-0.7">15</text><circle cx="698.0" cy="569.1" r="8.4" fill="#00ff00" stroke="#008080" stroke-width="1.5"/><text x="697.7" y="573.5" font-size="12" text-anchor="middle" letter-spacing="-0.7">P1</text><circle cx="631.5" cy="320.4" r="8.4" fill="#00ff00" stroke="#008080" stroke-width="1.5"/><text x="631.5" y="324.8" font-size="12" text-anchor="middle">8</text><circle cx="644.0" cy="337.6" r="8.4" fill="#00ff00" stroke="#008080" stroke-width="1.5"/><text x="644.0" y="342.0" font-size="12" text-anchor="middle">7</text><circle cx="652.3" cy="357.3" r="8.4" fill="#00ff00" stroke="#008080" stroke-width="1.5"/><text x="652.3" y="361.7" font-size="12" text-anchor="middle">6</text><circle cx="655.8" cy="378.4" r="8.4" fill="#00ff00" stroke="#008080" stroke-width="1.5"/><text x="655.8" y="382.8" font-size="12" text-anchor="middle">5</text><circle cx="654.4" cy="399.7" r="8.4" fill="#00ff00" stroke="#008080" stroke-width="1.5"/><text x="654.4" y="404.1" font-size="12" text-anchor="middle">4</text><circle cx="648.1" cy="420.1" r="8.4" fill="#00ff00" stroke="#008080" stroke-width="1.5"/><text x="648.1" y="424.5" font-size="12" text-anchor="middle">3</text><circle cx="637.2" cy="438.5" r="8.4" fill="#00ff00" stroke="#008080" stroke-width="1.5"/><text x="637.2" y="442.9" font-size="12" text-anchor="middle">2</text><circle cx="622.5" cy="453.9" r="8.4" fill="#00ff00" stroke="#008080" stroke-width="1.5"/><text x="622.5" y="458.3" font-size="12" text-anchor="middle">1</text><circle cx="617.7" cy="334.3" r="8.4" fill="#00ff00" stroke="#008080" stroke-width="1.5"/><text x="617.7" y="338.7" font-size="12" text-anchor="middle">9</text><circle cx="628.6" cy="350.4" r="8.4" fill="#00ff00" stroke="#008080" stroke-width="1.5"/><text x="628.3" y="354.8" font-size="12" text-anchor="middle" letter-spacing="-0.7">10</text><circle cx="634.9" cy="368.8" r="8.4" fill="#00ff00" stroke="#008080" stroke-width="1.5"/><text x="634.6" y="373.2" font-size="12" text-anchor="middle" letter-spacing="-0.7">11</text><circle cx="636.1" cy="388.2" r="8.4" fill="#00ff00" stroke="#008080" stroke-width="1.5"/><text x="635.8" y="392.6" font-size="12" text-anchor="middle" letter-spacing="-0.7">12</text><circle cx="632.1" cy="407.3" r="8.4" fill="#00ff00" stroke="#008080" stroke-width="1.5"/><text x="631.7" y="411.7" font-size="12" text-anchor="middle" letter-spacing="-0.7">13</text><circle cx="623.2" cy="424.5" r="8.4" fill="#00ff00" stroke="#008080" stroke-width="1.5"/><text x="622.8" y="428.9" font-size="12" text-anchor="middle" letter-spacing="-0.7">14</text><circle cx="610.0" cy="438.8" r="8.4" fill="#00ff00" stroke="#008080" stroke-width="1.5"/><text x="609.6" y="443.2" font-size="12" text-anchor="middle" letter-spacing="-0.7">P2</text><path d="M563.5 90V677M324 383.5H800" stroke="#000" stroke-width="1" fill="none"/><path d="M794 377.5L805 383.5L794 389.5Z" fill="#000"/><text x="315.6" y="103.2" font-size="12" fill="#0000ff">-10</text><text x="324.4" y="132.0" font-size="12" fill="#0000ff">-10</text><text x="365.2" y="103.2" font-size="12" fill="#0000ff">-8</text><text x="324.4" y="181.6" font-size="12" fill="#0000ff">-8</text><text x="414.8" y="103.2" font-size="12" fill="#0000ff">-6</text><text x="324.4" y="231.2" font-size="12" fill="#0000ff">-6</text><text x="464.4" y="103.2" font-size="12" fill="#0000ff">-4</text><text x="324.4" y="280.8" font-size="12" fill="#0000ff">-4</text><text x="514.0" y="103.2" font-size="12" fill="#0000ff">-2</text><text x="324.4" y="330.4" font-size="12" fill="#0000ff">-2</text><text x="564.0" y="103.2" font-size="12" fill="#0000ff">0</text><text x="324.4" y="380.0" font-size="12" fill="#0000ff">0</text><text x="613.6" y="103.2" font-size="12" fill="#0000ff">2</text><text x="324.4" y="429.6" font-size="12" fill="#0000ff">2</text><text x="663.2" y="103.2" font-size="12" fill="#0000ff">4</text><text x="324.4" y="479.2" font-size="12" fill="#0000ff">4</text><text x="712.8" y="103.2" font-size="12" fill="#0000ff">6</text><text x="324.4" y="528.8" font-size="12" fill="#0000ff">6</text><text x="762.4" y="103.2" font-size="12" fill="#0000ff">8</text><text x="324.4" y="578.4" font-size="12" fill="#0000ff">8</text></g></svg>
<svg style="left:812px;top:89px" width="73" height="120"><circle cx="19.9" cy="19.7" r="7" fill="#00ff00" stroke="#444" stroke-width=".8"/><text x="34" y="24.3" font-size="12" textLength="12.6" lengthAdjust="spacingAndGlyphs">P1</text><circle cx="56.5" cy="19.7" r="2.9" fill="#000"/><circle cx="19.9" cy="45.7" r="7" fill="#00ff00" stroke="#444" stroke-width=".8"/><text x="34" y="50.3" font-size="12" textLength="12.6" lengthAdjust="spacingAndGlyphs">P2</text><circle cx="56.5" cy="45.7" r="2.2" fill="#fff" stroke="#000" stroke-width="1.1"/><circle cx="19.9" cy="71.7" r="7" fill="#ff00ff" stroke="#444" stroke-width=".8"/><text x="34" y="76.3" font-size="12" textLength="12.6" lengthAdjust="spacingAndGlyphs">P3</text><circle cx="56.5" cy="71.7" r="2.9" fill="#000"/><circle cx="19.9" cy="97.7" r="7" fill="#ff00ff" stroke="#444" stroke-width=".8"/><text x="34" y="102.3" font-size="12" textLength="12.6" lengthAdjust="spacingAndGlyphs">P4</text><circle cx="56.5" cy="97.7" r="2.2" fill="#fff" stroke="#000" stroke-width="1.1"/></svg>
<div style="position:absolute;left:146px;top:577px;width:250px;height:237px;background:#68768b;"></div>
<div style="position:absolute;left:147px;top:608px;width:248px;height:205px;background:#f0f0f0;"></div>
<div style="position:absolute;left:146px;top:577px;width:250px;height:1px;background:#8490a3;"></div>
<div style="position:absolute;left:146px;top:577px;width:1px;height:237px;background:#8490a3;"></div>
<svg style="left:154px;top:583px" width="18" height="18" viewBox="0 0 18 18"><circle cx="9" cy="8.6" r="5" fill="none" stroke="#1a78c8" stroke-width="5"/><g stroke="#fbb81c" stroke-width="1.4" stroke-linecap="butt" fill="none"><path d="M1.2 8.6H6.2M11.8 8.6H16.8M3.5 3L7 6.5M14.5 3L11 6.5"/><path d="M7 10.7L4.2 13.3V17M11 10.7L13.8 13.3V17" stroke-width="1.7"/></g></svg>
<span class="t" style="left:176.40px;top:586.34px;font-size:12px;color:#fff;letter-spacing:0.031px;">Differential Mode Impedance</span>
<svg style="left:370px;top:584px" width="20" height="18"><path d="M4.5 3.5L14.5 13.5M14.5 3.5L4.5 13.5" stroke="#fff" stroke-width="1.1" fill="none"/></svg>
<svg style="left:0;top:0" width="1152" height="824" viewBox="0 0 1152 824"><g fill="none" stroke="#000" stroke-width="1.8" stroke-linejoin="miter"><path d="M171.6 667 H238.3"/><path d="M171.6 726.7 H238.3"/><path d="M238.30 667.00C238.30 661.00 243.05 657.40 246.55 657.40C250.55 657.40 254.70 661.00 254.70 668.00C254.70 672.00 253.60 674.20 252.00 674.20C250.40 674.20 249.30 672.00 249.30 668.00C249.30 661.00 253.90 657.40 257.90 657.40C261.90 657.40 266.50 661.00 266.50 668.00C266.50 672.00 265.40 674.20 263.80 674.20C262.20 674.20 261.10 672.00 261.10 668.00C261.10 661.00 265.70 657.40 269.70 657.40C273.70 657.40 278.30 661.00 278.30 668.00C278.30 672.00 277.20 674.20 275.60 674.20C274.00 674.20 272.90 672.00 272.90 668.00C272.90 661.00 277.50 657.40 281.50 657.40C285.50 657.40 290.10 661.00 290.10 668.00C290.10 672.00 289.00 674.20 287.40 674.20C285.80 674.20 284.70 672.00 284.70 668.00C284.70 661.00 289.30 657.40 293.30 657.40C297.30 657.40 301.90 661.00 301.90 668.00C301.90 672.00 300.80 674.20 299.20 674.20C297.60 674.20 296.50 672.00 296.50 668.00C296.50 661.00 301.20 657.40 305.20 657.40C308.70 657.40 314.00 661.00 314.00 667.00"/><path d="M238.30 726.70C238.30 720.70 243.05 717.10 246.55 717.10C250.55 717.10 254.70 720.70 254.70 727.70C254.70 731.70 253.60 733.90 252.00 733.90C250.40 733.90 249.30 731.70 249.30 727.70C249.30 720.70 253.90 717.10 257.90 717.10C261.90 717.10 266.50 720.70 266.50 727.70C266.50 731.70 265.40 733.90 263.80 733.90C262.20 733.90 261.10 731.70 261.10 727.70C261.10 720.70 265.70 717.10 269.70 717.10C273.70 717.10 278.30 720.70 278.30 727.70C278.30 731.70 277.20 733.90 275.60 733.90C274.00 733.90 272.90 731.70 272.90 727.70C272.90 720.70 277.50 717.10 281.50 717.10C285.50 717.10 290.10 720.70 290.10 727.70C290.10 731.70 289.00 733.90 287.40 733.90C285.80 733.90 284.70 731.70 284.70 727.70C284.70 720.70 289.30 717.10 293.30 717.10C297.30 717.10 301.90 720.70 301.90 727.70C301.90 731.70 300.80 733.90 299.20 733.90C297.60 733.90 296.50 731.70 296.50 727.70C296.50 720.70 301.20 717.10 305.20 717.10C308.70 717.10 314.00 720.70 314.00 726.70"/><path d="M314 667 H380.6V726.7H314"/><path d="M171.6 667 V726.7"/><circle cx="171.6" cy="696.2" r="13.4" fill="#f0f0f0"/><path d="M173 686.5C167.5 690 176 695.5 171 699.5C167.5 702.5 171.5 705 173 706" stroke-width="1.5"/><circle cx="171.6" cy="667" r="2.9" fill="#fff" stroke-width="1.4"/><circle cx="171.6" cy="726.7" r="2.9" fill="#fff" stroke-width="1.4"/><circle cx="380.6" cy="667" r="2.9" fill="#fff" stroke-width="1.4"/><circle cx="380.6" cy="726.7" r="2.9" fill="#fff" stroke-width="1.4"/></g><circle cx="234" cy="659.7" r="1.7"/><circle cx="234" cy="719.6" r="1.7"/><path d="M159.8 716H167M163.4 712.4V719.6" stroke="#000" stroke-width="1" fill="none"/><path d="M320.6 721.2C329.5 708 330 692 321.5 678.5" stroke="#000" stroke-width="1.1" stroke-dasharray="4.2 3" fill="none"/><path d="M316.6 671.2L325.6 677.2L320.3 678.3L319.2 683.6Z" fill="#000"/><text x="270.8" y="654" font-size="18.5" style="font-family:'Liberation Serif',serif;font-weight:bold;font-style:italic">L</text><text x="270.8" y="750.2" font-size="18.5" style="font-family:'Liberation Serif',serif;font-weight:bold;font-style:italic">L</text><text x="332.3" y="700.6" font-size="18.5" textLength="17.5" lengthAdjust="spacingAndGlyphs" style="font-family:'Liberation Serif',serif;font-weight:bold;font-style:italic">M</text><path d="M225.5 784.5H395" stroke="#a8a8a8" stroke-width="1" fill="none"/><path d="M225.5 785.5H395" stroke="#6e6e6e" stroke-width="1" fill="none"/><path d="M147 784.6L152.3 798.5Q153.6 801.7 157 801.7H214.6Q218 801.7 219.2 798.5L225 784.6Z" fill="#fff"/><path d="M147 784.6L152.3 798.5Q153.6 801.7 157 801.7H214.6Q218 801.7 219.2 798.5L225 784.6" fill="none" stroke="#111" stroke-width="1.3"/><path d="M225.5 784.6L231 797.5Q232.2 800.2 235.5 800.2H273.6Q276.8 800.2 277.9 797.5L282.4 785.5" fill="none" stroke="#111" stroke-width="1.3"/></svg>
<span class="t" style="left:159.40px;top:787.94px;font-size:12px;color:#000;letter-spacing:-0.278px;">Schematic</span>
<span class="t" style="left:238.30px;top:786.94px;font-size:12px;color:#000;letter-spacing:0.079px;">Model</span>
<div style="position:absolute;left:527px;top:386px;width:615px;height:428px;background:#fff;border:2px solid #000;box-sizing:border-box;"></div>
<svg style="left:0;top:0" width="1152" height="824" viewBox="0 0 1152 824"><path d="M638.5 424V757M649.5 424V757M657.5 424V757M663.5 424V757M668.5 424V757M672.5 424V757M675.5 424V757M678.5 424V757M700.5 424V757M710.5 424V757M718.5 424V757M724.5 424V757M729.5 424V757M733.5 424V757M737.5 424V757M740.5 424V757M761.5 424V757M772.5 424V757M779.5 424V757M785.5 424V757M790.5 424V757M794.5 424V757M798.5 424V757M801.5 424V757M822.5 424V757M833.5 424V757M841.5 424V757M847.5 424V757M851.5 424V757M856.5 424V757M859.5 424V757M862.5 424V757M883.5 424V757M894.5 424V757M902.5 424V757M908.5 424V757M913.5 424V757M917.5 424V757M920.5 424V757M923.5 424V757M945.5 424V757M955.5 424V757M963.5 424V757M969.5 424V757M974.5 424V757M978.5 424V757M982.5 424V757M985.5 424V757M1006.5 424V757M1017.5 424V757M1024.5 424V757M1030.5 424V757M1035.5 424V757M1039.5 424V757M1043.5 424V757M1046.5 424V757M1067.5 424V757M1078.5 424V757M1086.5 424V757M1092.5 424V757M1096.5 424V757M1101.5 424V757M1104.5 424V757M1107.5 424V757M620 743.5H1110M620 734.5H1110M620 728.5H1110M620 724.5H1110M620 720.5H1110M620 717.5H1110M620 714.5H1110M620 711.5H1110M620 695.5H1110M620 687.5H1110M620 681.5H1110M620 676.5H1110M620 672.5H1110M620 669.5H1110M620 666.5H1110M620 664.5H1110M620 647.5H1110M620 639.5H1110M620 633.5H1110M620 628.5H1110M620 624.5H1110M620 621.5H1110M620 618.5H1110M620 616.5H1110M620 599.5H1110M620 591.5H1110M620 585.5H1110M620 581.5H1110M620 577.5H1110M620 574.5H1110M620 571.5H1110M620 568.5H1110M620 552.5H1110M620 543.5H1110M620 537.5H1110M620 533.5H1110M620 529.5H1110M620 526.5H1110M620 523.5H1110M620 521.5H1110M620 504.5H1110M620 496.5H1110M620 490.5H1110M620 485.5H1110M620 481.5H1110M620 478.5H1110M620 475.5H1110M620 473.5H1110M620 456.5H1110M620 448.5H1110M620 442.5H1110M620 437.5H1110M620 434.5H1110M620 430.5H1110M620 428.5H1110M620 425.5H1110" stroke="#8a8a8a" stroke-width="1" stroke-dasharray="1 2" fill="none"/><path d="M681.5 424V757M742.5 424V757M804.5 424V757M865.5 424V757M926.5 424V757M988.5 424V757M1049.5 424V757M620 709.5H1110M620 662.5H1110M620 614.5H1110M620 566.5H1110M620 518.5H1110M620 471.5H1110" stroke="#a0a0a0" stroke-width="1" stroke-dasharray="4 2" fill="none"/><path d="M620.5 758V767M638.5 758V761M649.5 758V761M657.5 758V761M663.5 758V761M668.5 758V761M672.5 758V761M675.5 758V761M678.5 758V761M681.5 758V767M700.5 758V761M710.5 758V761M718.5 758V761M724.5 758V761M729.5 758V761M733.5 758V761M737.5 758V761M740.5 758V761M742.5 758V767M761.5 758V761M772.5 758V761M779.5 758V761M785.5 758V761M790.5 758V761M794.5 758V761M798.5 758V761M801.5 758V761M804.5 758V767M822.5 758V761M833.5 758V761M841.5 758V761M847.5 758V761M851.5 758V761M856.5 758V761M859.5 758V761M862.5 758V761M865.5 758V767M883.5 758V761M894.5 758V761M902.5 758V761M908.5 758V761M913.5 758V761M917.5 758V761M920.5 758V761M923.5 758V761M926.5 758V767M945.5 758V761M955.5 758V761M963.5 758V761M969.5 758V761M974.5 758V761M978.5 758V761M982.5 758V761M985.5 758V761M988.5 758V767M1006.5 758V761M1017.5 758V761M1024.5 758V761M1030.5 758V761M1035.5 758V761M1039.5 758V761M1043.5 758V761M1046.5 758V761M1049.5 758V767M1067.5 758V761M1078.5 758V761M1086.5 758V761M1092.5 758V761M1096.5 758V761M1101.5 758V761M1104.5 758V761M1107.5 758V761M1110.5 758V767M611 757.5H620M617 743.5H620M617 734.5H620M617 728.5H620M617 724.5H620M617 720.5H620M617 717.5H620M617 714.5H620M617 711.5H620M611 709.5H620M617 695.5H620M617 687.5H620M617 681.5H620M617 676.5H620M617 672.5H620M617 669.5H620M617 666.5H620M617 664.5H620M611 662.5H620M617 647.5H620M617 639.5H620M617 633.5H620M617 628.5H620M617 624.5H620M617 621.5H620M617 618.5H620M617 616.5H620M611 614.5H620M617 599.5H620M617 591.5H620M617 585.5H620M617 581.5H620M617 577.5H620M617 574.5H620M617 571.5H620M617 568.5H620M611 566.5H620M617 552.5H620M617 543.5H620M617 537.5H620M617 533.5H620M617 529.5H620M617 526.5H620M617 523.5H620M617 521.5H620M611 518.5H620M617 504.5H620M617 496.5H620M617 490.5H620M617 485.5H620M617 481.5H620M617 478.5H620M617 475.5H620M617 473.5H620M611 471.5H620M617 456.5H620M617 448.5H620M617 442.5H620M617 437.5H620M617 434.5H620M617 430.5H620M617 428.5H620M617 425.5H620M611 423.5H620M619.5 423V758M620 758.5H1111M620 423.5H1111M1110.5 423V759" stroke="#000" stroke-width="1" fill="none" shape-rendering="crispEdges"/><polyline points="655.8,729.2 676.7,728.4 710.0,727.8 720.0,726.8 726.7,725.6 732.0,724.4 737.8,722.8 743.3,720.3 748.5,717.8 754.4,714.7 765.6,707.8 776.7,700.0 790.6,689.4 804.4,678.6 865.6,631.4 926.7,584.6 948.4,567.0 963.7,554.6 974.6,545.5 983.3,537.9 989.2,531.8 994.2,525.9 998.6,519.3 1002.5,510.6 1005.2,501.9 1007.3,489.9 1008.4,479.0 1009.1,463.7 1010.0,439.7 1010.8,463.7 1011.7,479.0 1013.2,492.0 1016.1,505.2 1020.4,516.1 1025.9,525.9 1032.4,535.3 1039.0,543.4 1044.5,551.0 1048.8,558.6 1051.0,563.4" fill="none" stroke="#f00" stroke-width="2.2" stroke-linejoin="round"/><text x="606" y="428.6" font-size="15" text-anchor="end" textLength="50.4" lengthAdjust="spacingAndGlyphs">100,000</text><text x="606" y="476.3" font-size="15" text-anchor="end" textLength="42.7" lengthAdjust="spacingAndGlyphs">10,000</text><text x="606" y="524.0" font-size="15" text-anchor="end" textLength="34.9" lengthAdjust="spacingAndGlyphs">1,000</text><text x="606" y="571.7" font-size="15" text-anchor="end" textLength="23.3" lengthAdjust="spacingAndGlyphs">100</text><text x="606" y="619.5" font-size="15" text-anchor="end" textLength="15.5" lengthAdjust="spacingAndGlyphs">10</text><text x="606" y="667.2" font-size="15" text-anchor="end" textLength="7.8" lengthAdjust="spacingAndGlyphs">1</text><text x="606" y="714.9" font-size="15" text-anchor="end" textLength="19.4" lengthAdjust="spacingAndGlyphs">0.1</text><text x="606" y="762.6" font-size="15" text-anchor="end" textLength="27.2" lengthAdjust="spacingAndGlyphs">0.01</text><text x="620.0" y="782.9" font-size="15" text-anchor="middle" textLength="32.6" lengthAdjust="spacingAndGlyphs">10Hz</text><text x="681.2" y="782.9" font-size="15" text-anchor="middle" textLength="40.3" lengthAdjust="spacingAndGlyphs">100Hz</text><text x="742.5" y="782.9" font-size="15" text-anchor="middle" textLength="31.8" lengthAdjust="spacingAndGlyphs">1kHz</text><text x="803.8" y="782.9" font-size="15" text-anchor="middle" textLength="39.5" lengthAdjust="spacingAndGlyphs">10kHz</text><text x="865.0" y="782.9" font-size="15" text-anchor="middle" textLength="47.3" lengthAdjust="spacingAndGlyphs">100kHz</text><text x="926.2" y="782.9" font-size="15" text-anchor="middle" textLength="36.4" lengthAdjust="spacingAndGlyphs">1MHz</text><text x="987.5" y="782.9" font-size="15" text-anchor="middle" textLength="44.2" lengthAdjust="spacingAndGlyphs">10MHz</text><text x="1048.8" y="782.9" font-size="15" text-anchor="middle" textLength="51.9" lengthAdjust="spacingAndGlyphs">100MHz</text><text x="1110.0" y="782.9" font-size="15" text-anchor="middle" textLength="35.7" lengthAdjust="spacingAndGlyphs">1GHz</text><text x="865.7" y="408.9" font-size="16.8" text-anchor="middle" textLength="23.4" lengthAdjust="spacingAndGlyphs">DM</text><text x="864.8" y="799.6" font-size="16.8" text-anchor="middle" textLength="71.7" lengthAdjust="spacingAndGlyphs">Frequency</text><text transform="translate(549,590.1) rotate(-90)" font-size="16.8" text-anchor="middle" textLength="116.4" lengthAdjust="spacingAndGlyphs">Z-parameters [Ω]</text></svg>
<svg style="left:0;top:0" width="1152" height="90" viewBox="0 0 1152 90"><path d="M340.5 70.2L346.2 76.6" stroke="#b4601e" stroke-width="2.8" stroke-linecap="round"/><circle cx="335.6" cy="64.6" r="6.1" fill="#d3e2f8" stroke="#2a2a2a" stroke-width="1.3"/><path d="M332.1 64.6h7M335.6 61.1v7" stroke="#3f63b4" stroke-width="1.7"/><path d="M367.5 70.2L373.2 76.6" stroke="#b4601e" stroke-width="2.8" stroke-linecap="round"/><circle cx="362.6" cy="64.6" r="6.1" fill="#d3e2f8" stroke="#2a2a2a" stroke-width="1.3"/><path d="M359.1 64.6h7" stroke="#3f63b4" stroke-width="1.7"/><path d="M400.4 70.2L406.1 76.6" stroke="#b4601e" stroke-width="2.8" stroke-linecap="round"/><circle cx="395.5" cy="64.6" r="6.1" fill="#d3e2f8" stroke="#2a2a2a" stroke-width="1.3"/><path d="M392.7 67.2L398.3 62.0" stroke="#4a6cb4" stroke-width="1.7"/><path d="M381.5 58V78" stroke="#c6c6c6" stroke-width="1"/><path d="M414.5 58V78" stroke="#c6c6c6" stroke-width="1"/><path d="M474.5 58V78" stroke="#c6c6c6" stroke-width="1"/><rect x="418.5" y="55.5" width="26" height="24" fill="#c7dff4" stroke="#93c8f5"/><rect x="445.5" y="55.5" width="26" height="24" fill="#c7dff4" stroke="#93c8f5"/><rect x="478.5" y="55.5" width="26" height="24" fill="#c7dff4" stroke="#93c8f5"/><path d="M425.5 60.5V78M430.5 60.5V78M435.5 60.5V78M440.5 60.5V78M423 62.5H441M423 67.5H441M423 72.5H441M423 76.5H441" stroke="#8c8c8c" stroke-width="1.3" fill="none"/><path d="M424.5 74.8h3v3.6h-3z" fill="#7a7a8a"/><circle cx="426.0" cy="71.6" r="3.9" fill="#f8d238"/><circle cx="425.4" cy="70.8" r="1.7" fill="#fdf0a0"/><path d="M459.5 62V78M456 69.5H467" stroke="#000" stroke-width="1.3" fill="none"/><path d="M459.5 59.8L457.6 63.2h3.8zM468.6 69.5L465.2 67.6v3.8z" fill="#000"/><path d="M451.2 74.8h3v3.6h-3z" fill="#7a7a8a"/><circle cx="452.7" cy="71.6" r="3.9" fill="#f8d238"/><circle cx="452.1" cy="70.8" r="1.7" fill="#fdf0a0"/><circle cx="487.4" cy="64.5" r="4.6" fill="#3ee83e" stroke="#1c1c1c" stroke-width="1"/><text x="487.4" y="66.9" font-size="6.5" font-weight="bold" text-anchor="middle">1</text><circle cx="496.6" cy="73.7" r="4.6" fill="#f010e0" stroke="#1c1c1c" stroke-width="1"/><text x="496.6" y="76.1" font-size="6.5" font-weight="bold" text-anchor="middle">2</text><circle cx="513.5" cy="63.3" r="4.6" fill="#3ee83e" stroke="#1c1c1c" stroke-width="1"/><text x="513.5" y="65.7" font-size="6.5" font-weight="bold" text-anchor="middle">›</text><circle cx="522.3" cy="72.6" r="4.6" fill="#f010e0" stroke="#1c1c1c" stroke-width="1"/><circle cx="522.3" cy="72.6" r="1.3" fill="#000"/></svg>
</body></html>
